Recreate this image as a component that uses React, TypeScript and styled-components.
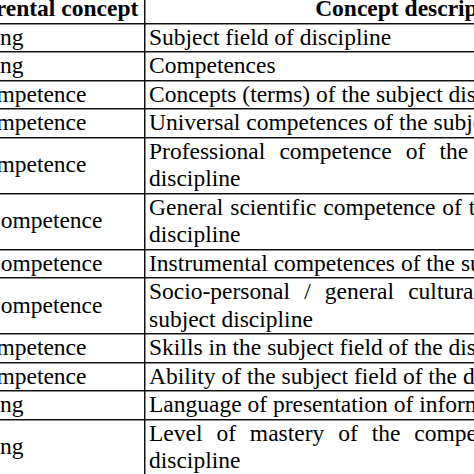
import React from "react";
import styled, { createGlobalStyle } from "styled-components";

const GlobalStyle = createGlobalStyle`
  html, body { margin: 0; padding: 0; background: #ffffff; }
  body { font-family: "Liberation Serif", "Times New Roman", serif; color: #000; }
`;

const Viewport = styled.div`
  width: 474px;
  height: 474px;
  overflow: hidden;
  background: #fff;
`;

const Table = styled.div`
  margin: -5px 0 0 -36px;
  width: 722px;
  font-family: "Liberation Serif", "Times New Roman", serif;
  font-size: 23.5px;
  line-height: 27.5px;
  color: #000;
`;

const Row = styled.div`
  display: grid;
  grid-template-columns: 181px 541px;
  border-bottom: 1px solid #111;
  box-shadow: 0 1px 0 rgba(0, 0, 0, 0.45);
`;

const ConceptCell = styled.div<{ $head?: boolean }>`
  box-sizing: border-box;
  padding: 0 3px;
  border-right: 1px solid #111;
  box-shadow: 1px 0 0 rgba(0, 0, 0, 0.45);
  display: flex;
  align-items: center;
  justify-content: ${(p) => (p.$head ? "center" : "flex-start")};
  overflow: hidden;
  font-weight: ${(p) => (p.$head ? 700 : 400)};
`;

const Term = styled.span<{ $indent: number }>`
  display: block;
  white-space: nowrap;
  margin-left: ${(p) => p.$indent}px;
`;

const DescCell = styled.div<{ $head?: boolean }>`
  box-sizing: border-box;
  padding: 0 3px 0 4px;
  text-align: ${(p) => (p.$head ? "center" : "justify")};
  font-weight: ${(p) => (p.$head ? 700 : 400)};
  white-space: ${(p) => (p.$head ? "nowrap" : "normal")};
`;

type Kind = "knowing" | "a" | "b";

const indents: Record<Kind, number> = { knowing: -31, a: 2, b: 18 };
const terms: Record<Kind, string> = {
  knowing: "Knowing",
  a: "Competence",
  b: "Competence",
};

const rows: { kind: Kind; desc: string }[] = [
  { kind: "knowing", desc: "Subject field of discipline" },
  { kind: "knowing", desc: "Competences" },
  { kind: "a", desc: "Concepts (terms) of the subject discipline" },
  { kind: "a", desc: "Universal competences of the subject discipline" },
  { kind: "a", desc: "Professional competence of the subject field of the discipline" },
  { kind: "b", desc: "General scientific competence of the subject field of the discipline" },
  { kind: "b", desc: "Instrumental competences of the subject discipline" },
  { kind: "b", desc: "Socio-personal / general cultural competence of the subject discipline" },
  { kind: "a", desc: "Skills in the subject field of the discipline" },
  { kind: "a", desc: "Ability of the subject field of the discipline" },
  { kind: "knowing", desc: "Language of presentation of information" },
  { kind: "knowing", desc: "Level of mastery of the competence of the subject discipline" },
];

export default function App() {
  return (
    <Viewport>
      <GlobalStyle />
      <Table>
        <Row>
          <ConceptCell $head>Parental concept</ConceptCell>
          <DescCell $head>Concept description</DescCell>
        </Row>
        {rows.map((r, i) => (
          <Row key={i}>
            <ConceptCell>
              <Term $indent={indents[r.kind]}>{terms[r.kind]}</Term>
            </ConceptCell>
            <DescCell>{r.desc}</DescCell>
          </Row>
        ))}
      </Table>
    </Viewport>
  );
}
